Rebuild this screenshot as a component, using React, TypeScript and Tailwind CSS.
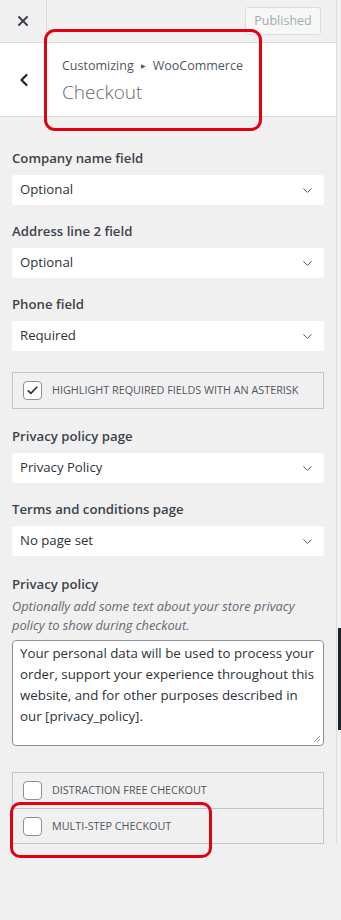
import { ChevronDown, ChevronLeft, X } from "lucide-react";

type SelectProps = { label: string; value: string };

function SelectControl({ label, value }: SelectProps) {
  return (
    <div className="mb-4">
      <div className="mb-[7px] text-[13.2px] font-semibold leading-5 text-[#3c434a]">{label}</div>
      <div className="flex h-[30px] items-center justify-between rounded-[3px] bg-white pl-2 pr-[9px] text-[13.2px] text-[#2c3338]">
        <span>{value}</span>
        <ChevronDown size={15} strokeWidth={1.6} className="text-[#50575e]" />
      </div>
    </div>
  );
}

function Checkbox({ checked }: { checked?: boolean }) {
  return (
    <span className="flex h-[19px] w-[19px] shrink-0 items-center justify-center rounded-[4px] border border-[#8c8f94] bg-white">
      {checked ? (
        <svg width="13" height="13" viewBox="0 0 20 20">
          <path d="M3.5 10.5l4 4 9-9.5" fill="none" stroke="#2c3338" strokeWidth="2.6" strokeLinecap="round" strokeLinejoin="round" />
        </svg>
      ) : null}
    </span>
  );
}

function CheckRow({ label, checked, divider }: { label: string; checked?: boolean; divider?: boolean }) {
  return (
    <div className={`flex h-[35px] items-center gap-[10px] pl-[10px] ${divider ? "border-t border-[#c3c4c7]" : ""}`}>
      <Checkbox checked={checked} />
      <span className="text-[10.8px] uppercase text-[#50575e]">{label}</span>
    </div>
  );
}

export default function App() {
  return (
    <div className="relative min-h-[920px] w-[341px] bg-[#f0f0f1] font-['Open_Sans','Noto_Sans',sans-serif]">
      <div className="w-[337px] border-r border-[#dcdcde]">
        <div className="flex h-[43px] items-center justify-between border-b border-[#dcdcde]">
          <div className="flex h-full w-[47px] items-center justify-center border-r border-[#dcdcde]">
            <X size={16} strokeWidth={3} className="text-[#3c434a]" />
          </div>
          <div className="mr-[15px] flex h-[28px] w-[76px] items-center justify-center rounded-[3px] border border-[#dcdcde] bg-[#f6f7f7] text-[12.5px] text-[#a7aaad]">
            Published
          </div>
        </div>

        <div className="flex h-[74px] items-center border-b border-[#dcdcde] bg-white">
          <div className="flex w-[62px] items-center pl-[14px]">
            <ChevronLeft size={20} strokeWidth={2.6} className="text-[#1d2327]" />
          </div>
          <div>
            <div className="flex items-center text-[12.5px] leading-5 text-[#50575e]">
              <span>Customizing</span>
              <span className="mx-[7px] text-[6px]">▶</span>
              <span>WooCommerce</span>
            </div>
            <div className="mt-[4px] text-[19px] font-light leading-6 text-[#646970]">Checkout</div>
          </div>
        </div>

        <div className="flex flex-col px-3 pt-[31px]">
          <SelectControl label="Company name field" value="Optional" />
          <SelectControl label="Address line 2 field" value="Optional" />
          <SelectControl label="Phone field" value="Required" />

          <div className="mb-[17px] mt-[5px] border border-[#c3c4c7]">
            <CheckRow label="Highlight required fields with an asterisk" checked />
          </div>

          <SelectControl label="Privacy policy page" value="Privacy Policy" />
          <SelectControl label="Terms and conditions page" value="No page set" />

          <div className="mt-[2px] text-[13.2px] font-semibold leading-5 text-[#3c434a]">Privacy policy</div>
          <p className="mt-[3px] text-[12.8px] italic leading-[19px] text-[#646970]">
            Optionally add some text about your store privacy policy to show during checkout.
          </p>
          <div className="relative mt-[5px] h-[106px] rounded-[4px] border border-[#8c8f94] bg-white px-[7px] py-[2px] text-[13.3px] leading-[21px] text-[#2c3338]">
            Your personal data will be used to process your order, support your experience throughout this website, and for other purposes described in our [privacy_policy].
            <svg className="absolute bottom-[2px] right-[2px]" width="8" height="8" viewBox="0 0 8 8">
              <path d="M7 1L1 7M7 4L4 7" stroke="#8c8f94" strokeWidth="1" />
            </svg>
          </div>

          <div className="mt-[26px] border border-[#c3c4c7]">
            <CheckRow label="Distraction free checkout" />
            <CheckRow label="Multi-step checkout" divider />
          </div>
        </div>
      </div>

      <div className="absolute left-[338px] top-[628px] h-[102px] w-[3px] bg-[#1d2327]" />
      <div className="pointer-events-none absolute left-[44px] top-[29px] h-[102px] w-[218px] rounded-[11px] border-[3px] border-[#e3000f]" />
      <div className="pointer-events-none absolute left-[10px] top-[802px] h-[56px] w-[202px] rounded-[10px] border-[3px] border-[#e3000f]" />
    </div>
  );
}
